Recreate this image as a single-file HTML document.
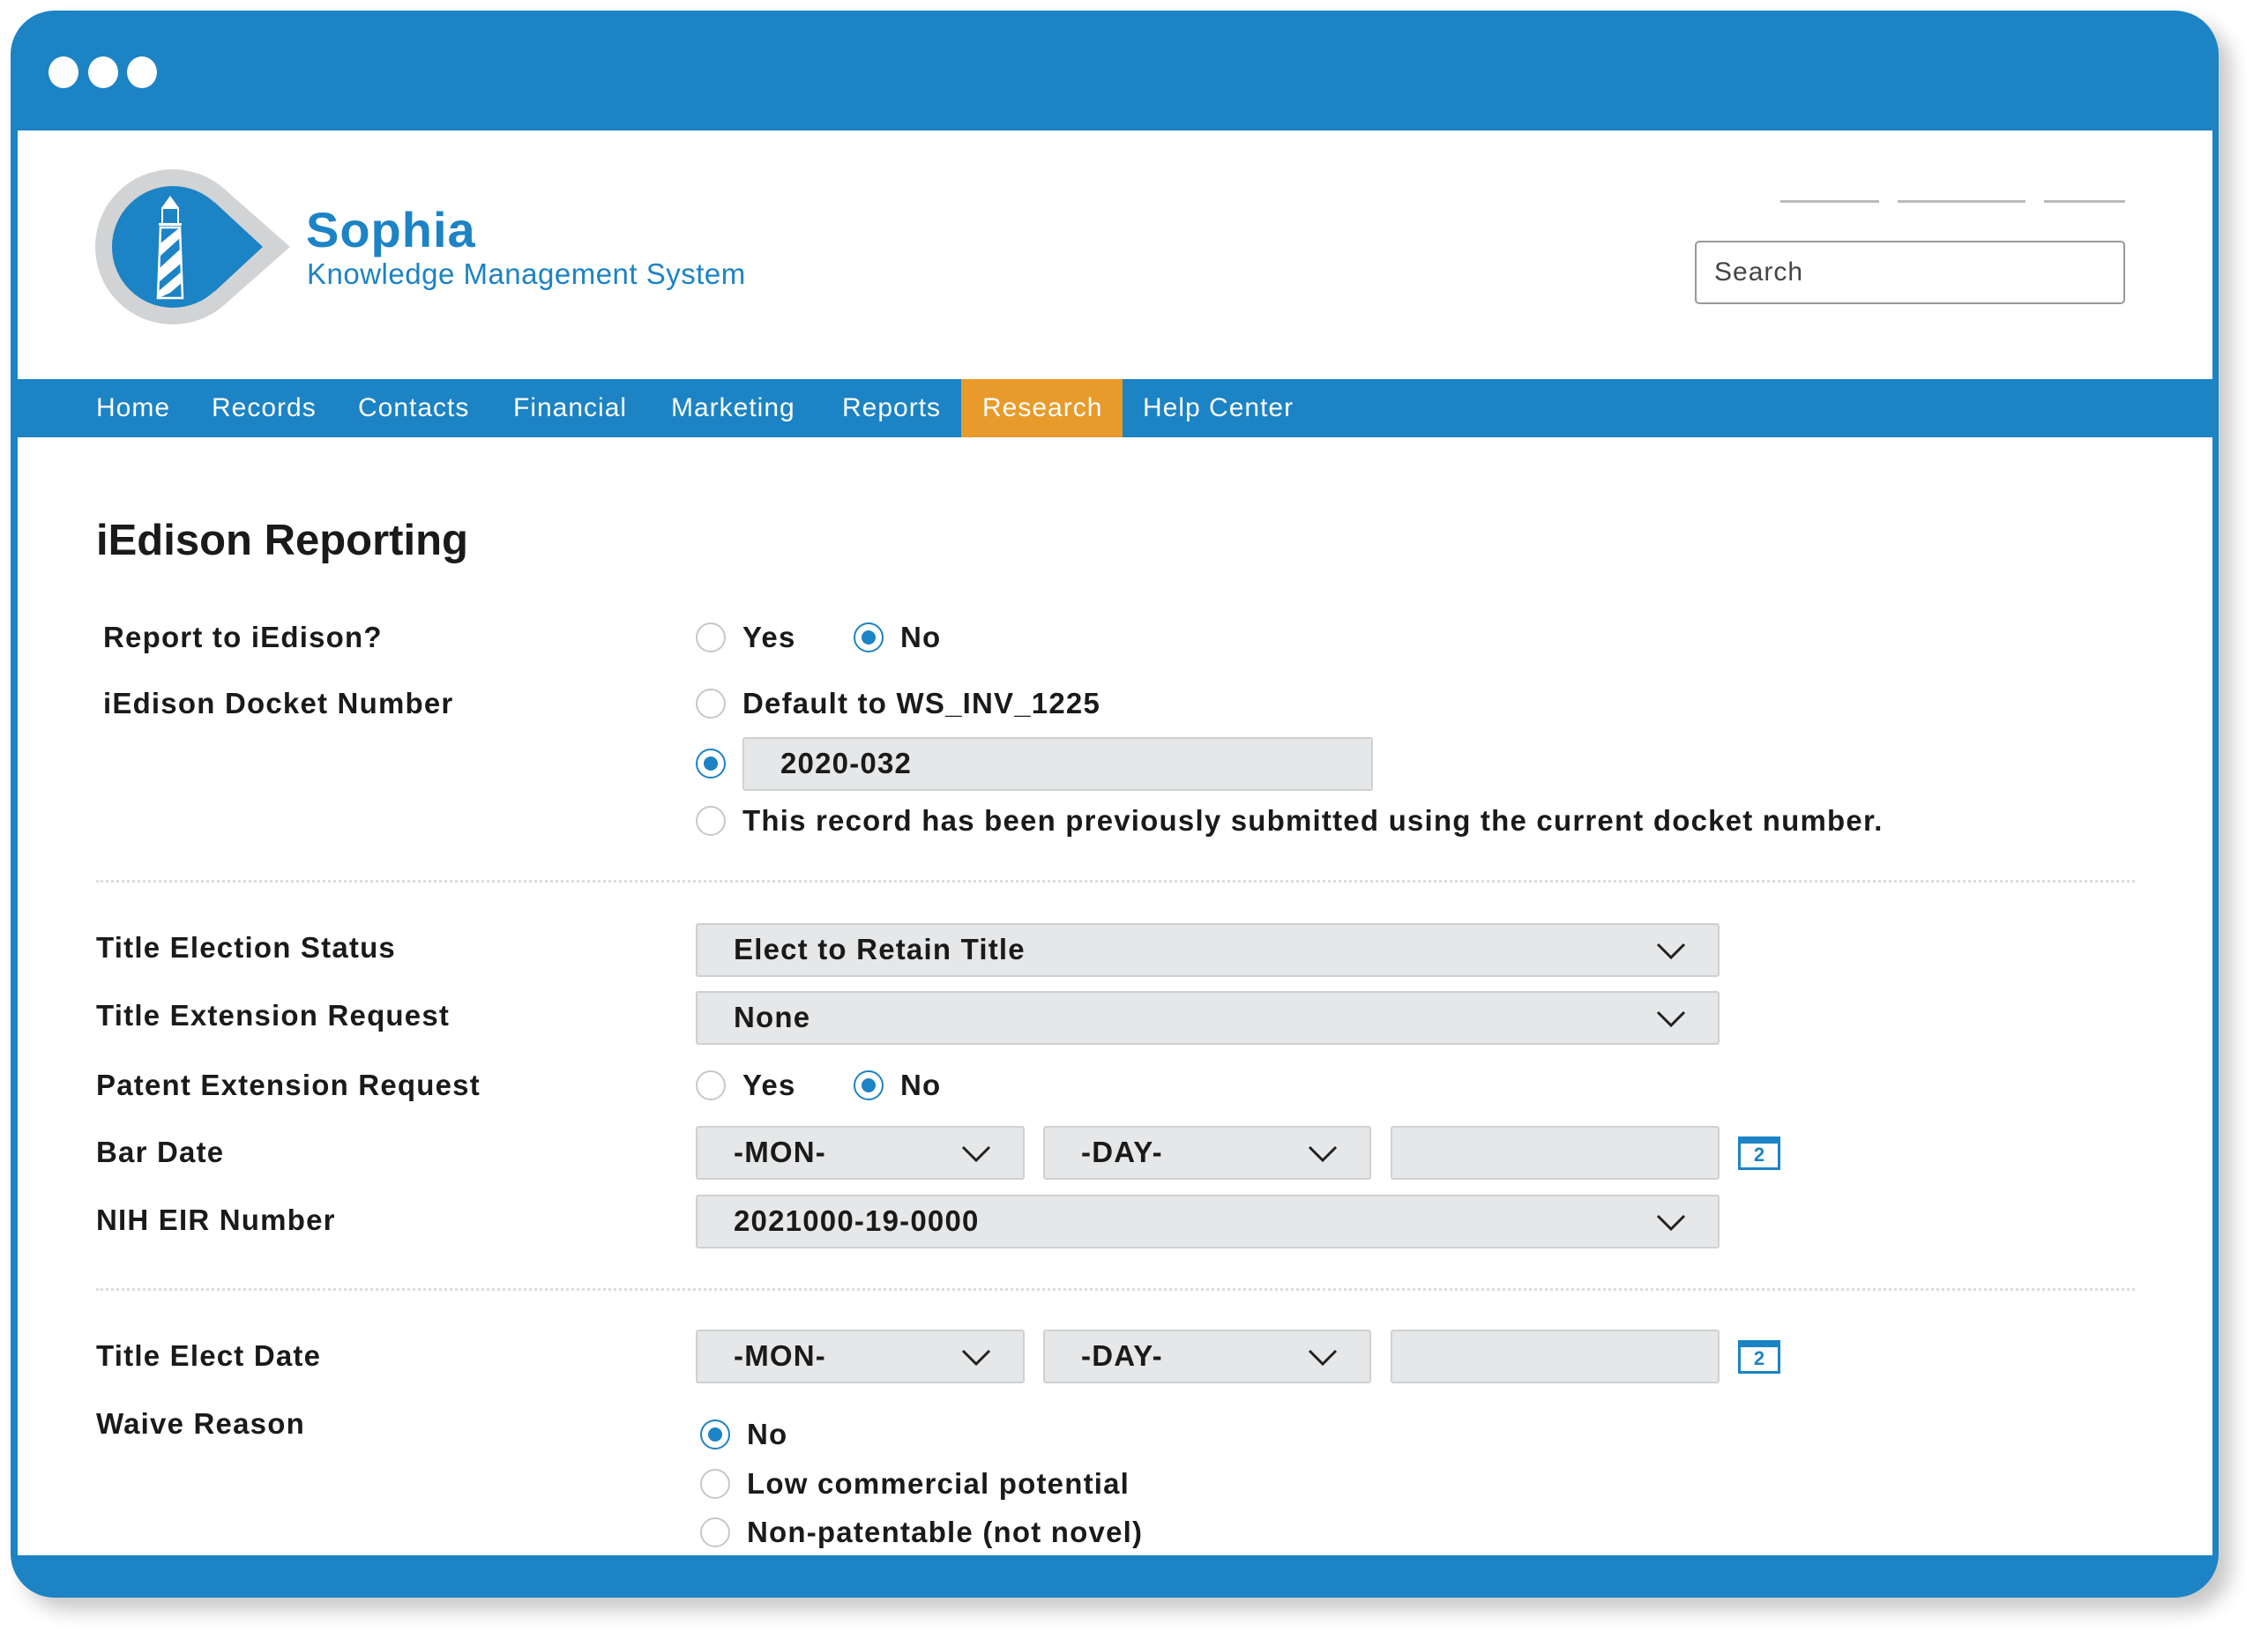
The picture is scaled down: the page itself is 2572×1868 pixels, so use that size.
<!DOCTYPE html>
<html><head><meta charset="utf-8"><style>
*{margin:0;padding:0;box-sizing:border-box}
body{width:2572px;height:1868px;background:#fff;position:relative;overflow:hidden;font-family:"Liberation Sans",sans-serif;color:#1a1a1a}
.abs{position:absolute}
.frame{left:12px;top:12px;width:2504px;height:1800px;background:#1c83c5;border-radius:50px;box-shadow:14px 14px 22px rgba(0,0,0,0.22)}
.dot{width:34px;height:36px;border-radius:50%;background:#fff;top:64px}
.content{left:20px;top:148px;width:2489px;height:1616px;background:#fff}
.nav{left:20px;top:430px;width:2489px;height:66px;background:#1c83c5}
.nv{top:430px;height:66px;line-height:66px;color:#fff;font-size:30px;letter-spacing:1px}
.lbl{font-size:33px;font-weight:bold;letter-spacing:1.2px;line-height:40px}
.txt{font-size:33px;font-weight:bold;letter-spacing:1.2px;line-height:40px}
.rad{width:34px;height:34px;border-radius:50%;border:2px solid #c8c8c8;background:#fff}
.rad.on{border-color:#1c83c5}
.rad.on::after{content:"";position:absolute;left:7px;top:7px;width:16px;height:16px;border-radius:50%;background:#1c83c5}
.sel{background:#e6e7e8;border:2px solid #cfd0d1;border-radius:3px;height:61px}
.sel span{position:absolute;left:41px;top:8px}
.sel svg{position:absolute;right:36px;top:20px}
.div{left:109px;width:2312px;border-top:3px dotted #dcdcdc;height:0}
.cal{width:48px;height:38px;border:3px solid #1c83c5;border-top:8px solid #1c83c5;background:#fff;color:#1c83c5;font-size:22px;font-weight:bold;text-align:center;line-height:26px}
</style></head><body>
<div class="abs frame"></div>
<div class="abs dot" style="left:55px"></div>
<div class="abs dot" style="left:100px"></div>
<div class="abs dot" style="left:144px"></div>
<div class="abs content"></div>
<svg class="abs" style="left:0;top:0" width="420" height="420" viewBox="0 0 420 420">
<circle cx="196" cy="280" r="88" fill="#d1d3d4"/><polygon points="329,280 254,214 254,346" fill="#d1d3d4"/>
<circle cx="196" cy="280" r="69" fill="#1c83c5"/><polygon points="298,280 243,229 243,331" fill="#1c83c5"/>
<polygon points="193,222 183,236 203,236" fill="#fff"/>
<rect x="184" y="236" width="18" height="18" fill="none" stroke="#fff" stroke-width="2"/>
<rect x="180" y="253" width="26" height="3" fill="#fff"/>
<polygon points="182,258 204,258 207,338 179,338" fill="none" stroke="#fff" stroke-width="2.5"/>
<polygon points="182,276 204,258 204,270 182,290" fill="#fff"/>
<polygon points="181,304 205,282 206,298 180,320" fill="#fff"/>
<polygon points="180,330 206,308 207,320 193,332 180,338" fill="#fff"/>
</svg>
<div class="abs" style="left:347px;top:228px;font-size:56px;font-weight:bold;color:#1c83c5;letter-spacing:1px">Sophia</div>
<div class="abs" style="left:348px;top:292px;font-size:33px;color:#1c83c5;letter-spacing:0.5px">Knowledge Management System</div>
<div class="abs" style="left:2019px;top:227px;width:112px;height:3px;background:#bbb"></div>
<div class="abs" style="left:2152px;top:227px;width:145px;height:3px;background:#bbb"></div>
<div class="abs" style="left:2318px;top:227px;width:92px;height:3px;background:#bbb"></div>
<div class="abs" style="left:1922px;top:273px;width:488px;height:72px;border:2px solid #999;border-radius:5px"></div>
<div class="abs" style="left:1944px;top:292px;font-size:30px;color:#444;letter-spacing:1px">Search</div>
<div class="abs nav"></div>
<div class="abs" style="left:1090px;top:430px;width:183px;height:66px;background:#e89b2a"></div>
<div class="abs nv" style="left:109px">Home</div>
<div class="abs nv" style="left:240px">Records</div>
<div class="abs nv" style="left:406px">Contacts</div>
<div class="abs nv" style="left:582px">Financial</div>
<div class="abs nv" style="left:761px">Marketing</div>
<div class="abs nv" style="left:955px">Reports</div>
<div class="abs nv" style="left:1114px">Research</div>
<div class="abs nv" style="left:1296px">Help Center</div>

<div class="abs" style="left:109px;top:585px;font-size:49px;font-weight:bold;letter-spacing:0px">iEdison Reporting</div>

<div class="abs lbl" style="left:117px;top:703px">Report to iEdison?</div>
<div class="abs rad" style="left:789px;top:706px"></div><div class="abs txt" style="left:842px;top:703px">Yes</div>
<div class="abs rad on" style="left:968px;top:706px"></div><div class="abs txt" style="left:1021px;top:703px">No</div>

<div class="abs lbl" style="left:117px;top:778px">iEdison Docket Number</div>
<div class="abs rad" style="left:789px;top:781px"></div><div class="abs txt" style="left:842px;top:778px">Default to WS_INV_1225</div>
<div class="abs rad on" style="left:789px;top:849px"></div>
<div class="abs sel" style="left:842px;top:836px;width:715px"><span class="txt">2020-032</span></div>
<div class="abs rad" style="left:789px;top:914px"></div><div class="abs txt" style="left:842px;top:911px">This record has been previously submitted using the current docket number.</div>

<div class="abs div" style="top:998px"></div>

<div class="abs lbl" style="left:109px;top:1055px">Title Election Status</div>
<div class="abs sel" style="left:789px;top:1047px;width:1161px"><span class="txt">Elect to Retain Title</span><svg width="34" height="20"><path d="M2 2 L17 17 L32 2" fill="none" stroke="#222" stroke-width="3"/></svg></div>
<div class="abs lbl" style="left:109px;top:1132px">Title Extension Request</div>
<div class="abs sel" style="left:789px;top:1124px;width:1161px"><span class="txt">None</span><svg width="34" height="20"><path d="M2 2 L17 17 L32 2" fill="none" stroke="#222" stroke-width="3"/></svg></div>
<div class="abs lbl" style="left:109px;top:1211px">Patent Extension Request</div>
<div class="abs rad" style="left:789px;top:1214px"></div><div class="abs txt" style="left:842px;top:1211px">Yes</div>
<div class="abs rad on" style="left:968px;top:1214px"></div><div class="abs txt" style="left:1021px;top:1211px">No</div>

<div class="abs lbl" style="left:109px;top:1287px">Bar Date</div>
<div class="abs sel" style="left:789px;top:1277px;width:373px"><span class="txt">-MON-</span><svg width="34" height="20"><path d="M2 2 L17 17 L32 2" fill="none" stroke="#222" stroke-width="3"/></svg></div>
<div class="abs sel" style="left:1183px;top:1277px;width:372px"><span class="txt">-DAY-</span><svg width="34" height="20"><path d="M2 2 L17 17 L32 2" fill="none" stroke="#222" stroke-width="3"/></svg></div>
<div class="abs sel" style="left:1577px;top:1277px;width:373px"></div>
<div class="abs cal" style="left:1971px;top:1289px">2</div>

<div class="abs lbl" style="left:109px;top:1364px">NIH EIR Number</div>
<div class="abs sel" style="left:789px;top:1355px;width:1161px"><span class="txt">2021000-19-0000</span><svg width="34" height="20"><path d="M2 2 L17 17 L32 2" fill="none" stroke="#222" stroke-width="3"/></svg></div>

<div class="abs div" style="top:1461px"></div>

<div class="abs lbl" style="left:109px;top:1518px">Title Elect Date</div>
<div class="abs sel" style="left:789px;top:1508px;width:373px"><span class="txt">-MON-</span><svg width="34" height="20"><path d="M2 2 L17 17 L32 2" fill="none" stroke="#222" stroke-width="3"/></svg></div>
<div class="abs sel" style="left:1183px;top:1508px;width:372px"><span class="txt">-DAY-</span><svg width="34" height="20"><path d="M2 2 L17 17 L32 2" fill="none" stroke="#222" stroke-width="3"/></svg></div>
<div class="abs sel" style="left:1577px;top:1508px;width:373px"></div>
<div class="abs cal" style="left:1971px;top:1520px">2</div>

<div class="abs lbl" style="left:109px;top:1595px">Waive Reason</div>
<div class="abs rad on" style="left:794px;top:1610px"></div><div class="abs txt" style="left:847px;top:1607px">No</div>
<div class="abs rad" style="left:794px;top:1666px"></div><div class="abs txt" style="left:847px;top:1663px">Low commercial potential</div>
<div class="abs rad" style="left:794px;top:1721px"></div><div class="abs txt" style="left:847px;top:1718px">Non-patentable (not novel)</div>
</body></html>
